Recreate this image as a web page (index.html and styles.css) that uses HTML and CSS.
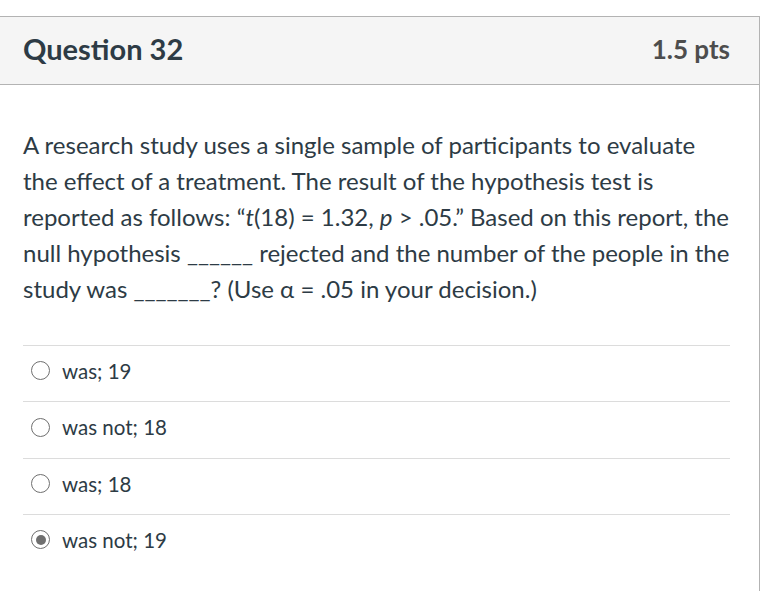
FILE: index.html
```html
<!DOCTYPE html>
<html>
<head>
<meta charset="utf-8">
<link rel="stylesheet" href="styles.css">
</head>
<body>
<div class="card">
  <div class="header">
    <h2 class="title">Question 32</h2>
    <div class="pts">1.5 pts</div>
  </div>
  <div class="content">
    <p class="question">A research study uses a single sample of participants to evaluate the effect of a treatment. The result of the hypothesis test is reported as follows: “<i>t</i>(18) = 1.32, <i>p</i> &gt; .05.” Based on this report, the null hypothesis ______ rejected and the number of the people in the study was _______? (Use α = .05 in your decision.)</p>
    <div class="answers">
      <div class="answer"><span class="radio"></span><span class="label">was; 19</span></div>
      <div class="answer"><span class="radio"></span><span class="label">was not; 18</span></div>
      <div class="answer"><span class="radio"></span><span class="label">was; 18</span></div>
      <div class="answer"><span class="radio checked"></span><span class="label">was not; 19</span></div>
    </div>
  </div>
</div>
</body>
</html>
```
FILE: styles.css
```css
html, body {
  margin: 0;
  padding: 0;
  background: #ffffff;
}
body {
  font-family: Lato, "Liberation Sans", sans-serif;
  color: #2d3b45;
}
.card {
  margin-top: 16px;
  width: 760px;
  height: 575px;
  border-top: 1px solid #b3b3b3;
  border-right: 1px solid #b3b3b3;
  box-sizing: border-box;
}
.header {
  height: 68px;
  background: #f5f5f5;
  border-bottom: 1px solid #b3b3b3;
  box-sizing: border-box;
  display: flex;
  align-items: center;
  justify-content: space-between;
  padding: 0 29px 4px 23px;
}
.title {
  margin: 0;
  font-size: 29px;
  font-weight: 700;
  color: #2d3b45;
}
.pts {
  font-size: 26px;
  font-weight: 700;
  color: #4d4d4d;
}
.content {
  padding: 42px 29px 0 23px;
}
.question {
  margin: 0;
  font-size: 24px;
  line-height: 36px;
}
.answers {
  margin-top: 38px;
}
.answer {
  border-top: 1px solid #dcdcdc;
  height: 56px;
  display: flex;
  align-items: center;
  gap: 12px;
  padding-left: 8px;
  padding-bottom: 6px;
  box-sizing: border-box;
}
.answer:nth-child(2) {
  height: 57px;
}
.radio {
  width: 19px;
  height: 19px;
  border: 1.5px solid #6f6f6f;
  border-radius: 50%;
  box-sizing: border-box;
  display: flex;
  align-items: center;
  justify-content: center;
}
.radio.checked::after {
  content: "";
  width: 10px;
  height: 10px;
  border-radius: 50%;
  background: #6f6f6f;
}
.label {
  font-size: 20.5px;
}
```
